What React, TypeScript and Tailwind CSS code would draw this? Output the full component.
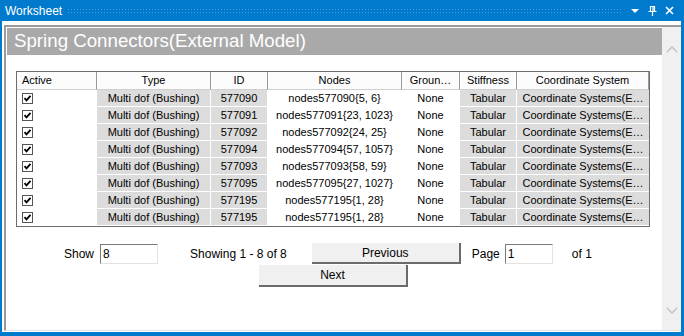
import React from 'react';

const rows = [
  { id: '577090', nodes: 'nodes577090{5, 6}' },
  { id: '577091', nodes: 'nodes577091{23, 1023}' },
  { id: '577092', nodes: 'nodes577092{24, 25}' },
  { id: '577094', nodes: 'nodes577094{57, 1057}' },
  { id: '577093', nodes: 'nodes577093{58, 59}' },
  { id: '577095', nodes: 'nodes577095{27, 1027}' },
  { id: '577195', nodes: 'nodes577195{1, 28}' },
  { id: '577195', nodes: 'nodes577195{1, 28}' },
];

function CheckBox() {
  return (
    <span className="w-[11px] h-[11px] border border-[#555] bg-white flex items-center justify-center">
      <svg width="9" height="9" viewBox="0 0 9 9">
        <path d="M1.5 4.2 L3.5 6.3 L7.5 1.8" stroke="#000" strokeWidth="1.8" fill="none" />
      </svg>
    </span>
  );
}

export default function App() {
  return (
    <div className="w-[684px] h-[336px] bg-[#007acc] flex flex-col font-['Liberation_Sans',Arial,sans-serif] text-black overflow-hidden">
      {/* Title bar */}
      <div className="h-[21px] flex items-center pl-[5px] pr-[10px] shrink-0">
        <span className="text-white text-[12px] leading-none">Worksheet</span>
        <div className="flex-1 h-[5px] ml-[5px] mr-[8px] bg-[radial-gradient(circle,#4a9fdc_0.7px,transparent_0.9px)] bg-[length:3px_3px]" />
        <svg width="10" height="6" viewBox="0 0 10 6" className="mr-[8px]">
          <path d="M1 1 H9 L5 5 Z" fill="#fff" />
        </svg>
        <svg width="9" height="10" viewBox="0 0 9 10" className="mr-[8px]">
          <path d="M2.5 0.5 H6.5 V5.5 H2.5 Z M5 1 V5 M0.5 5.5 H8.5 M4.5 5.5 V10" stroke="#fff" strokeWidth="1.2" fill="none" />
        </svg>
        <svg width="9" height="9" viewBox="0 0 9 9">
          <path d="M1 1 L8 8 M8 1 L1 8" stroke="#fff" strokeWidth="1.7" />
        </svg>
      </div>

      {/* Body */}
      <div className="flex-1 ml-[2px] mr-[3px] mb-[4px] bg-white pt-[4px] pl-[2px] pb-[1px] flex">
        <div className="flex-1 flex border-t-2 border-l-2 border-t-[#9a9a9a] border-l-[#9a9a9a] border-b border-b-[#e3e3e3]">
          <div className="flex-1 pt-[1px] pl-[1px] flex flex-col">
            <div className="h-[27px] bg-[#a9a9a9] flex items-center pl-[7px]">
              <span className="text-white text-[18.7px] leading-none">Spring Connectors(External Model)</span>
            </div>

            {/* Grid */}
            <div className="mt-[16px] ml-[9px] w-[634px] border border-[#6d6d6d] text-[11px]">
              <div className="flex h-[18px] bg-[#fcfcfc]">
                <div className="w-[80px] border-r border-r-[#9a9a9a] border-b border-b-[#cfcfcf] flex items-center pl-[5px]">Active</div>
                <div className="w-[114px] border-r border-r-[#9a9a9a] border-b border-b-[#cfcfcf] flex items-center justify-center">Type</div>
                <div className="w-[57px] border-r border-r-[#9a9a9a] border-b border-b-[#cfcfcf] flex items-center justify-center">ID</div>
                <div className="w-[134px] border-r border-r-[#9a9a9a] border-b border-b-[#cfcfcf] flex items-center justify-center">Nodes</div>
                <div className="w-[58px] border-r border-r-[#9a9a9a] border-b border-b-[#cfcfcf] flex items-center justify-center">Groun…</div>
                <div className="w-[57px] border-r border-r-[#9a9a9a] border-b border-b-[#cfcfcf] flex items-center justify-center">Stiffness</div>
                <div className="w-[132px] border-r border-r-[#9a9a9a] border-b border-b-[#cfcfcf] flex items-center justify-center">Coordinate System</div>
              </div>
              {rows.map((r, i) => (
                <div key={i} className="flex h-[17px]">
                  <div className="w-[80px] border-r border-b border-white flex items-center pl-[5px]">
                    <CheckBox />
                  </div>
                  <div className="w-[114px] border-r border-b border-white bg-[#dcdcdc] flex items-center justify-center whitespace-nowrap">Multi dof (Bushing)</div>
                  <div className="w-[57px] border-r border-b border-white bg-[#dcdcdc] flex items-center justify-center">{r.id}</div>
                  <div className="w-[134px] border-r border-b border-white flex items-center justify-center whitespace-nowrap">{r.nodes}</div>
                  <div className="w-[58px] border-r border-b border-white flex items-center justify-center">None</div>
                  <div className="w-[57px] border-r border-b border-white bg-[#dcdcdc] flex items-center justify-center">Tabular</div>
                  <div className="w-[132px] border-b border-white bg-[#dcdcdc] flex items-center justify-center whitespace-nowrap">Coordinate Systems(E…</div>
                </div>
              ))}
            </div>

            {/* Paging */}
            <div className="mt-[16px] flex items-center h-[21px] pl-[57px] text-[12px]">
              <span>Show</span>
              <div className="ml-[6px] w-[58px] h-[20px] border border-t-[#7a7a7a] border-l-[#7a7a7a] border-b-[#e3e3e3] border-r-[#e3e3e3] flex items-center pl-[2px]">8</div>
              <span className="ml-[32px]">Showing 1 - 8 of 8</span>
              <div className="ml-[25px] w-[149px] h-[21px] bg-[#f0f0f0] border-r-2 border-b-2 border-[#6b6b6b] flex items-center justify-center">Previous</div>
              <span className="ml-[11px]">Page</span>
              <div className="ml-[5px] w-[48px] h-[20px] border border-t-[#7a7a7a] border-l-[#7a7a7a] border-b-[#e3e3e3] border-r-[#e3e3e3] flex items-center pl-[2px]">1</div>
              <span className="ml-[19px]">of 1</span>
            </div>
            <div className="mt-[1px] flex h-[22px] pl-[252px] text-[12px]">
              <div className="w-[149px] h-[22px] bg-[#f0f0f0] border-r-2 border-b-2 border-[#6b6b6b] flex items-center justify-center">Next</div>
            </div>
          </div>

          {/* Scrollbar */}
          <div className="w-[19px] bg-[#f0f0f0] flex flex-col items-center justify-between pt-[19px] pb-[16px]">
            <svg width="12" height="7" viewBox="0 0 12 7">
              <path d="M1 6 L6 1 L11 6" stroke="#c4c4c4" strokeWidth="1.6" fill="none" />
            </svg>
            <svg width="12" height="7" viewBox="0 0 12 7">
              <path d="M1 1 L6 6 L11 1" stroke="#c4c4c4" strokeWidth="1.6" fill="none" />
            </svg>
          </div>
        </div>
      </div>
    </div>
  );
}
